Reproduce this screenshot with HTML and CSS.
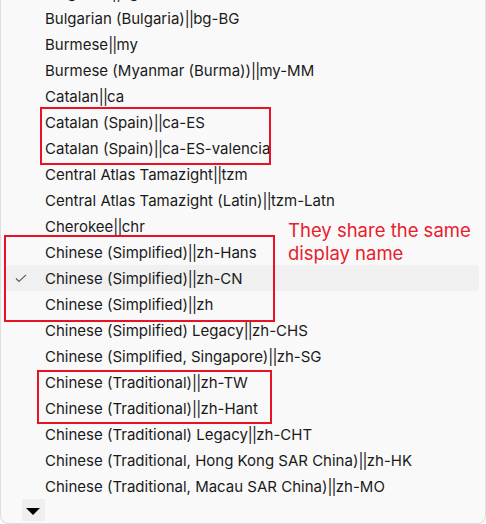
FILE: index.html
```html
<!DOCTYPE html>
<html>
<head>
<meta charset="utf-8">
<link rel="stylesheet" href="styles.css">
</head>
<body>
<div class="menu">
  <div class="list">
    <div class="row"><span class="slot"></span><span class="label">Bulgarian<span class="sep">||</span>bg</span></div>
    <div class="row"><span class="slot"></span><span class="label">Bulgarian (Bulgaria)<span class="sep">||</span>bg-BG</span></div>
    <div class="row"><span class="slot"></span><span class="label">Burmese<span class="sep">||</span>my</span></div>
    <div class="row"><span class="slot"></span><span class="label">Burmese (Myanmar (Burma))<span class="sep">||</span>my-MM</span></div>
    <div class="row"><span class="slot"></span><span class="label">Catalan<span class="sep">||</span>ca</span></div>
    <div class="row"><span class="slot"></span><span class="label">Catalan (Spain)<span class="sep">||</span>ca-ES</span></div>
    <div class="row"><span class="slot"></span><span class="label">Catalan (Spain)<span class="sep">||</span>ca-ES-valencia</span></div>
    <div class="row"><span class="slot"></span><span class="label">Central Atlas Tamazight<span class="sep">||</span>tzm</span></div>
    <div class="row"><span class="slot"></span><span class="label">Central Atlas Tamazight (Latin)<span class="sep">||</span>tzm-Latn</span></div>
    <div class="row"><span class="slot"></span><span class="label">Cherokee<span class="sep">||</span>chr</span></div>
    <div class="row"><span class="slot"></span><span class="label">Chinese (Simplified)<span class="sep">||</span>zh-Hans</span></div>
    <div class="row selected"><span class="slot"><svg class="check" width="12" height="10" viewBox="0 0 12 10"><polyline points="1,4.5 4,7.5 11,0.8" fill="none" stroke="#5a5a5a" stroke-width="1.1"/></svg></span><span class="label">Chinese (Simplified)<span class="sep">||</span>zh-CN</span></div>
    <div class="row"><span class="slot"></span><span class="label">Chinese (Simplified)<span class="sep">||</span>zh</span></div>
    <div class="row"><span class="slot"></span><span class="label">Chinese (Simplified) Legacy<span class="sep">||</span>zh-CHS</span></div>
    <div class="row"><span class="slot"></span><span class="label">Chinese (Simplified, Singapore)<span class="sep">||</span>zh-SG</span></div>
    <div class="row"><span class="slot"></span><span class="label">Chinese (Traditional)<span class="sep">||</span>zh-TW</span></div>
    <div class="row"><span class="slot"></span><span class="label">Chinese (Traditional)<span class="sep">||</span>zh-Hant</span></div>
    <div class="row"><span class="slot"></span><span class="label">Chinese (Traditional) Legacy<span class="sep">||</span>zh-CHT</span></div>
    <div class="row"><span class="slot"></span><span class="label">Chinese (Traditional, Hong Kong SAR China)<span class="sep">||</span>zh-HK</span></div>
    <div class="row"><span class="slot"></span><span class="label">Chinese (Traditional, Macau SAR China)<span class="sep">||</span>zh-MO</span></div>
  </div>
  <div class="scroll-down"><svg width="23" height="22" viewBox="0 0 23 22"><polygon points="4,9 18,9 11,16" fill="#000"/></svg></div>

  <div class="mark mark-catalan"></div>
  <div class="mark mark-simplified"></div>
  <div class="mark mark-traditional"></div>
  <div class="note">They share the same<br>display name</div>
</div>
</body>
</html>
```

FILE: styles.css
```css
html, body {
  margin: 0;
  padding: 0;
  background: #ffffff;
}

.menu {
  position: relative;
  box-sizing: border-box;
  width: 486px;
  height: 524px;
  background: #f9f9f9;
  border: 1px solid #dedede;
  border-top: none;
  border-radius: 0 0 8px 8px;
  overflow: hidden;
  font-family: Inter, "Noto Sans", "Noto Sans CJK SC", sans-serif;
  font-size: 15px;
  color: #1a1a1a;
}

.list {
  margin-top: -21px;
  display: flex;
  flex-direction: column;
}

.row {
  height: 26px;
  margin: 0 6px 0 4px;
  display: flex;
  align-items: center;
  border-radius: 4px;
  white-space: nowrap;
}

.row.selected {
  background: #f0f0f0;
}

.slot {
  width: 40px;
  flex: 0 0 40px;
  display: flex;
  align-items: center;
  padding-left: 10px;
  box-sizing: border-box;
}

.check {
  display: block;
  margin-top: 1px;
}

.sep {
  letter-spacing: -0.8px;
}

.scroll-down {
  width: 23px;
  height: 22px;
  margin: 0 0 0 21px;
  background: #efefef;
}

.scroll-down svg {
  display: block;
}

.mark {
  position: absolute;
  box-sizing: border-box;
  border: 2px solid #e81224;
}

.mark-catalan {
  left: 39px;
  top: 107px;
  width: 231px;
  height: 58px;
}

.mark-simplified {
  left: 3px;
  top: 235px;
  width: 271px;
  height: 87px;
}

.mark-traditional {
  left: 36px;
  top: 370px;
  width: 235px;
  height: 54px;
}

.note {
  position: absolute;
  left: 287px;
  top: 219px;
  font-size: 18.5px;
  line-height: 23px;
  color: #e8202c;
  white-space: nowrap;
}
```
